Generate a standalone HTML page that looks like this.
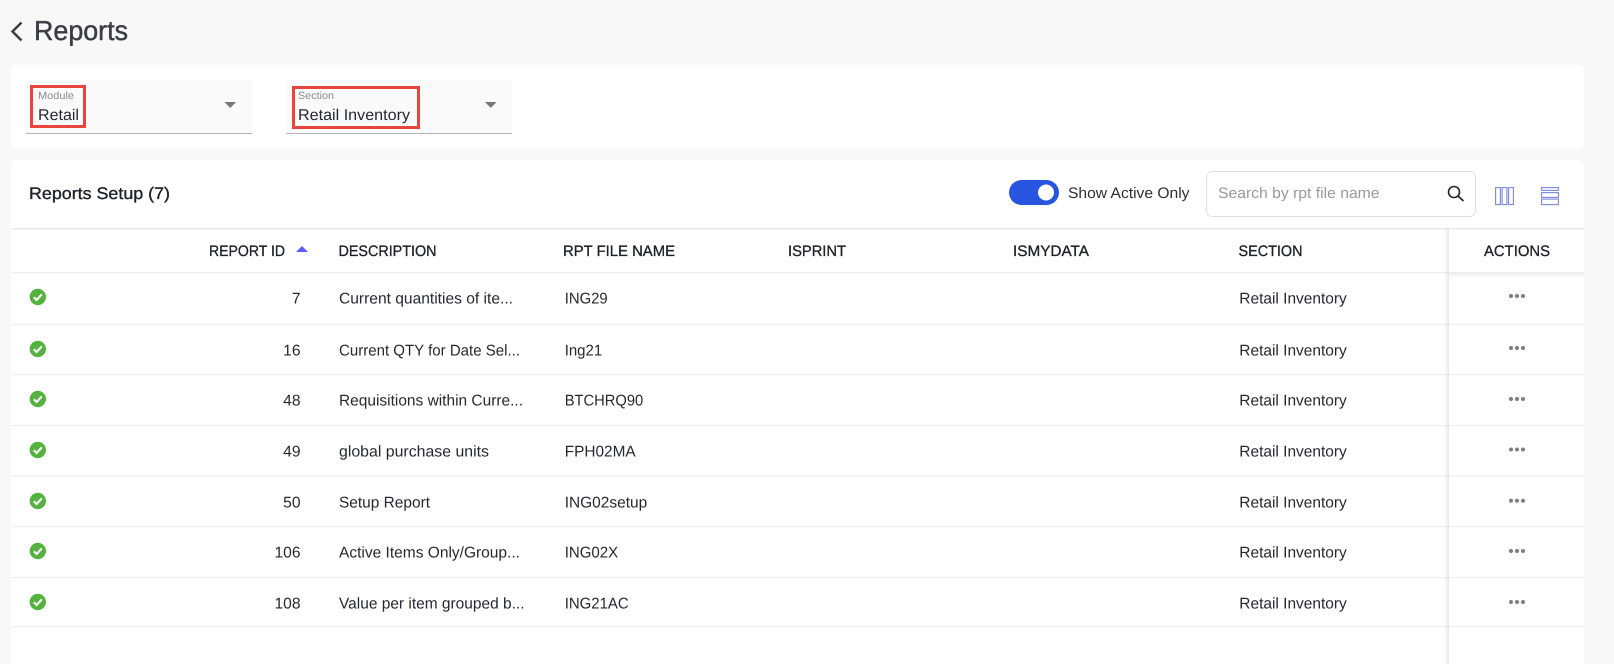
<!DOCTYPE html>
<html><head><meta charset="utf-8"><title>Reports</title>
<style>
html,body{margin:0;padding:0;width:1614px;height:664px;overflow:hidden;background:#f8f8f8}
svg{display:block}
text{font-family:"Liberation Sans",sans-serif;font-size:15.6px;fill:#272732}
.th{font-size:15.2px;fill:#20202a;stroke:#20202a;stroke-width:.3px}
.line{fill:#eeeef1}
</style></head><body>
<svg width="1614" height="664" viewBox="0 0 1614 664" xmlns="http://www.w3.org/2000/svg" text-rendering="geometricPrecision">
<defs>
<linearGradient id="sh" x1="0" x2="1" y1="0" y2="0"><stop offset="0" stop-color="#000" stop-opacity="0"/><stop offset="1" stop-color="#000" stop-opacity=".09"/></linearGradient>
<linearGradient id="shv" x1="0" x2="0" y1="0" y2="1"><stop offset="0" stop-color="#000" stop-opacity=".07"/><stop offset="1" stop-color="#000" stop-opacity="0"/></linearGradient>
<g id="ck"><circle r="8.2" fill="#55b23f"/><path d="M-4 .3L-1.2 3 4 -2.6" fill="none" stroke="#fff" stroke-width="2.1"/></g>
<g id="dots" fill="#7d7d8a"><circle cx="-6" r="2"/><circle r="2"/><circle cx="6" r="2"/></g>
</defs>

<rect width="1614" height="664" fill="#f8f8f8"/>
<path d="M21.5 22.5L12.5 31.5 21.5 40.5" fill="none" stroke="#3c3c48" stroke-width="2.5"/>
<text x="34" y="40" style="font-size:27.5px;fill:#3c3c48;stroke:#3c3c48;stroke-width:.45px" textLength="94" lengthAdjust="spacingAndGlyphs">Reports</text>

<rect x="11" y="65" width="1573" height="84" rx="6" fill="#fff"/>
<path d="M26 84a4 4 0 0 1 4-4H252V134H26Z" fill="#fafafa"/>
<rect x="26" y="133" width="226" height="1" fill="#b4b4b4"/>
<path d="M286 84a4 4 0 0 1 4-4H512V134H286Z" fill="#fafafa"/>
<rect x="286" y="133" width="226" height="1" fill="#b4b4b4"/>
<rect x="31.500" y="86.500" width="53" height="40" fill="none" stroke="#e8453f" stroke-width="3"/>
<rect x="293.500" y="87.500" width="125" height="40" fill="none" stroke="#e8453f" stroke-width="3"/>
<text x="38" y="99" style="font-size:10.500px;fill:#8a8a8a" textLength="36" lengthAdjust="spacingAndGlyphs">Module</text>
<text x="38" y="120" textLength="41" lengthAdjust="spacingAndGlyphs">Retail</text>
<text x="298" y="99" style="font-size:10.500px;fill:#8a8a8a" textLength="36" lengthAdjust="spacingAndGlyphs">Section</text>
<text x="298" y="120" textLength="112" lengthAdjust="spacingAndGlyphs">Retail Inventory</text>
<path d="M224.500 102H236L230.250 108Z" fill="#777"/>
<path d="M485 102H496.500L490.750 108Z" fill="#777"/>

<path d="M11 166a6 6 0 0 1 6-6H1578a6 6 0 0 1 6 6V664H11Z" fill="#fff"/>
<text x="29" y="199" style="font-size:16.800px;fill:#20202a;stroke:#20202a;stroke-width:.35px" textLength="141" lengthAdjust="spacingAndGlyphs">Reports Setup (7)</text>
<rect x="1009" y="180" width="50" height="25" rx="12.500" fill="#2855e0"/>
<circle cx="1046" cy="192.500" r="8" fill="#fff"/>
<text x="1068" y="198" style="font-size:15.200px;fill:#2e2e38" textLength="121.500" lengthAdjust="spacingAndGlyphs">Show Active Only</text>
<rect x="1206.500" y="171.500" width="269" height="45" rx="6" fill="#fff" stroke="#dfdfe2"/>
<text x="1218" y="198" style="font-size:15.200px;fill:#999" textLength="161.500" lengthAdjust="spacingAndGlyphs">Search by rpt file name</text>
<circle cx="1454" cy="192" r="5.500" fill="none" stroke="#23232b" stroke-width="1.600"/>
<path d="M1458 196L1463.500 201" stroke="#23232b" stroke-width="1.700"/>

<g fill="none" stroke="#7a86dc" stroke-width="1.100">
<rect x="1495.600" y="187.600" width="4.800" height="17"/>
<rect x="1502.100" y="187.600" width="4.800" height="17"/>
<rect x="1508.600" y="187.600" width="4.800" height="17"/>
<rect x="1541.600" y="187.600" width="16.800" height="2.800"/>
<rect x="1541.600" y="192.600" width="16.800" height="4.800"/>
<rect x="1541.600" y="199.100" width="16.800" height="5.500"/>
</g>

<rect x="11" y="228" width="1573" height="1.500" fill="#e9e9ec"/>
<rect x="11" y="272" width="1573" height="1.200" class="line"/>
<rect x="11" y="323.500" width="1573" height="2" fill="#f3f3f5"/>
<rect x="11" y="374" width="1573" height="1.200" class="line"/>
<rect x="11" y="425" width="1573" height="1.200" class="line"/>
<rect x="11" y="475" width="1573" height="2" fill="#f3f3f5"/>
<rect x="11" y="526" width="1573" height="1.200" class="line"/>
<rect x="11" y="577" width="1573" height="1.200" class="line"/>
<rect x="11" y="626" width="1573" height="1.200" class="line"/>

<rect x="1444" y="229" width="5" height="435" fill="url(#sh)"/>
<rect x="1449" y="273" width="135" height="5" fill="url(#shv)"/>

<text class="th" x="209" y="256" textLength="76" lengthAdjust="spacingAndGlyphs">REPORT ID</text>
<path d="M296 252L302 246 308 252Z" fill="#5a5cff"/>
<text class="th" x="338.500" y="256" textLength="98" lengthAdjust="spacingAndGlyphs">DESCRIPTION</text>
<text class="th" x="563" y="256" textLength="112" lengthAdjust="spacingAndGlyphs">RPT FILE NAME</text>
<text class="th" x="788" y="256" textLength="58" lengthAdjust="spacingAndGlyphs">ISPRINT</text>
<text class="th" x="1013" y="256" textLength="76" lengthAdjust="spacingAndGlyphs">ISMYDATA</text>
<text class="th" x="1238.500" y="256" textLength="64" lengthAdjust="spacingAndGlyphs">SECTION</text>
<text class="th" x="1484" y="256" textLength="66" lengthAdjust="spacingAndGlyphs">ACTIONS</text>

<use href="#ck" x="37.800" y="297"/><use href="#ck" x="37.800" y="349"/><use href="#ck" x="37.800" y="399"/><use href="#ck" x="37.800" y="450"/><use href="#ck" x="37.800" y="501"/><use href="#ck" x="37.800" y="551"/><use href="#ck" x="37.800" y="602"/>

<g text-anchor="end">
<text x="300.500" y="303.500">7</text>
<text x="300.500" y="355.500">16</text>
<text x="300.500" y="405.500">48</text>
<text x="300.500" y="456.500">49</text>
<text x="300.500" y="507.500">50</text>
<text x="300.500" y="557.500">106</text>
<text x="300.500" y="608.500">108</text>
</g>

<text x="339" y="303.500" textLength="174" lengthAdjust="spacingAndGlyphs">Current quantities of ite...</text>
<text x="339" y="355.500" textLength="181" lengthAdjust="spacingAndGlyphs">Current QTY for Date Sel...</text>
<text x="339" y="405.500" textLength="184" lengthAdjust="spacingAndGlyphs">Requisitions within Curre...</text>
<text x="339" y="456.500" textLength="150" lengthAdjust="spacingAndGlyphs">global purchase units</text>
<text x="339" y="507.500" textLength="91" lengthAdjust="spacingAndGlyphs">Setup Report</text>
<text x="339" y="557.500" textLength="181" lengthAdjust="spacingAndGlyphs">Active Items Only/Group...</text>
<text x="339" y="608.500" textLength="185.500" lengthAdjust="spacingAndGlyphs">Value per item grouped b...</text>

<text x="564.700" y="303.500" textLength="43" lengthAdjust="spacingAndGlyphs">ING29</text>
<text x="564.700" y="355.500" textLength="37.500" lengthAdjust="spacingAndGlyphs">Ing21</text>
<text x="564.700" y="405.500" textLength="78.500" lengthAdjust="spacingAndGlyphs">BTCHRQ90</text>
<text x="564.700" y="456.500" textLength="71" lengthAdjust="spacingAndGlyphs">FPH02MA</text>
<text x="564.700" y="507.500" textLength="82.500" lengthAdjust="spacingAndGlyphs">ING02setup</text>
<text x="564.700" y="557.500" textLength="53.500" lengthAdjust="spacingAndGlyphs">ING02X</text>
<text x="564.700" y="608.500" textLength="64" lengthAdjust="spacingAndGlyphs">ING21AC</text>

<text x="1239.300" y="303.500" textLength="107.500" lengthAdjust="spacingAndGlyphs">Retail Inventory</text>
<text x="1239.300" y="355.500" textLength="107.500" lengthAdjust="spacingAndGlyphs">Retail Inventory</text>
<text x="1239.300" y="405.500" textLength="107.500" lengthAdjust="spacingAndGlyphs">Retail Inventory</text>
<text x="1239.300" y="456.500" textLength="107.500" lengthAdjust="spacingAndGlyphs">Retail Inventory</text>
<text x="1239.300" y="507.500" textLength="107.500" lengthAdjust="spacingAndGlyphs">Retail Inventory</text>
<text x="1239.300" y="557.500" textLength="107.500" lengthAdjust="spacingAndGlyphs">Retail Inventory</text>
<text x="1239.300" y="608.500" textLength="107.500" lengthAdjust="spacingAndGlyphs">Retail Inventory</text>

<use href="#dots" x="1517" y="296"/><use href="#dots" x="1517" y="348"/><use href="#dots" x="1517" y="399"/><use href="#dots" x="1517" y="449.500"/><use href="#dots" x="1517" y="500.700"/><use href="#dots" x="1517" y="551"/><use href="#dots" x="1517" y="602"/>
</svg>
</body></html>
